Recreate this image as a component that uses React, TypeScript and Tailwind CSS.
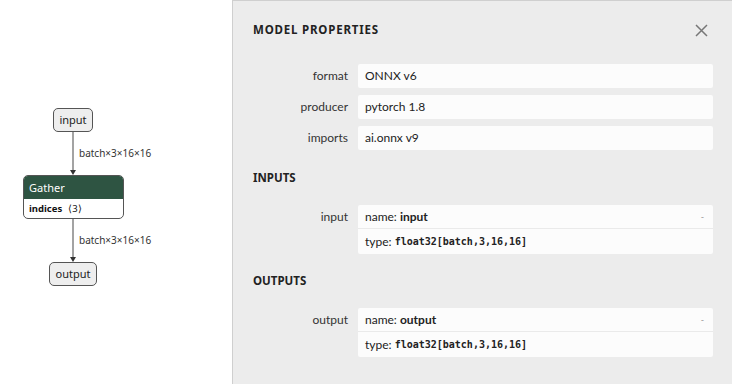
const rows = [
  { label: "format", value: "ONNX v6" },
  { label: "producer", value: "pytorch 1.8" },
  { label: "imports", value: "ai.onnx v9" },
];

const Graph = () => {
  return (
    <div className="relative h-full w-[232px] bg-white">
      <svg className="absolute inset-0" width="232" height="384">
        <line x1="73" y1="132" x2="73" y2="171" stroke="#666" strokeWidth="1.2" />
        <polygon points="70,170 76,170 73,175" fill="#333" />
        <line x1="73" y1="219" x2="73" y2="258" stroke="#666" strokeWidth="1.2" />
        <polygon points="70,257 76,257 73,262" fill="#333" />
      </svg>
      <div className="absolute left-[79px] top-[146px] text-[10px] leading-[14px] text-[#333]">batch×3×16×16</div>
      <div className="absolute left-[79px] top-[233px] text-[10px] leading-[14px] text-[#333]">batch×3×16×16</div>

      <div className="absolute left-[53px] top-[108px] flex h-[24px] w-[40px] items-center justify-center rounded-[5px] border border-[#555] bg-[#eeeeee] text-[11px] text-[#222]">
        input
      </div>

      <div className="absolute left-[23px] top-[175px] w-[101px] overflow-hidden rounded-[5px] border border-[#555] bg-white">
        <div className="flex h-[23px] items-center bg-[#2e5442] px-[5px] text-[11px] text-white">Gather</div>
        <div className="flex h-[19px] items-center gap-[6px] px-[5px] text-[9.5px] text-[#111]">
          <span className="font-bold">indices</span>
          <span>⟨3⟩</span>
        </div>
      </div>

      <div className="absolute left-[49px] top-[262px] flex h-[24px] w-[48px] items-center justify-center rounded-[5px] border border-[#555] bg-[#eeeeee] text-[11px] text-[#222]">
        output
      </div>
    </div>
  );
};

const Arg = ({ label, name }: { label: string; name: string }) => {
  return (
    <div className="flex font-['Lato',sans-serif]">
      <div className="w-[95px] pt-[3px] text-right text-[#333]">{label}</div>
      <div className="ml-[10px] w-[355px] rounded-[2px] bg-[#fcfcfc]">
        <div className="flex h-[24px] items-center justify-between border-b border-[#eaeaea] pl-[7px] pr-[9px]">
          <span>
            name: <span className="font-bold">{name}</span>
          </span>
          <span className="text-[9px] text-[#999]">-</span>
        </div>
        <div className="flex h-[25px] items-center pl-[7px]">
          type:&nbsp;
          <span className="font-['DejaVu_Sans_Mono',monospace] text-[10px] font-bold">float32[batch,3,16,16]</span>
        </div>
      </div>
    </div>
  );
};

const Panel = () => {
  return (
    <div className="h-full w-[500px] border-l border-t border-[#cfcfcf] bg-[#ececec] pl-[20px] text-[#222]">
      <div className="flex h-[56px] items-center justify-between pr-[24px] pt-[2px]">
        <span className="text-[11.5px] font-bold tracking-[0.8px]">MODEL PROPERTIES</span>
        <svg width="13" height="13" viewBox="0 0 13 13">
          <path d="M1 1 L12 12 M12 1 L1 12" stroke="#777" strokeWidth="1.5" />
        </svg>
      </div>

      <div className="mt-[7px] flex flex-col gap-[7px] font-['Lato',sans-serif]">
        {rows.map((r) => (
          <div key={r.label} className="flex">
            <div className="flex h-[24px] w-[95px] items-center justify-end text-[#333]">{r.label}</div>
            <div className="ml-[10px] flex h-[24px] w-[355px] items-center rounded-[2px] bg-[#fcfcfc] pl-[7px]">
              {r.value}
            </div>
          </div>
        ))}
      </div>

      <div className="mt-[19px] text-[11.5px] font-bold">INPUTS</div>
      <div className="mt-[18px]">
        <Arg label="input" name="input" />
      </div>

      <div className="mt-[18px] text-[11.5px] font-bold">OUTPUTS</div>
      <div className="mt-[18px]">
        <Arg label="output" name="output" />
      </div>
    </div>
  );
};

export default function App() {
  return (
    <div className="flex h-[384px] w-[732px] overflow-hidden bg-white font-['Noto_Sans',sans-serif] text-[12px] leading-[18px]">
      <Graph />
      <Panel />
    </div>
  );
}
